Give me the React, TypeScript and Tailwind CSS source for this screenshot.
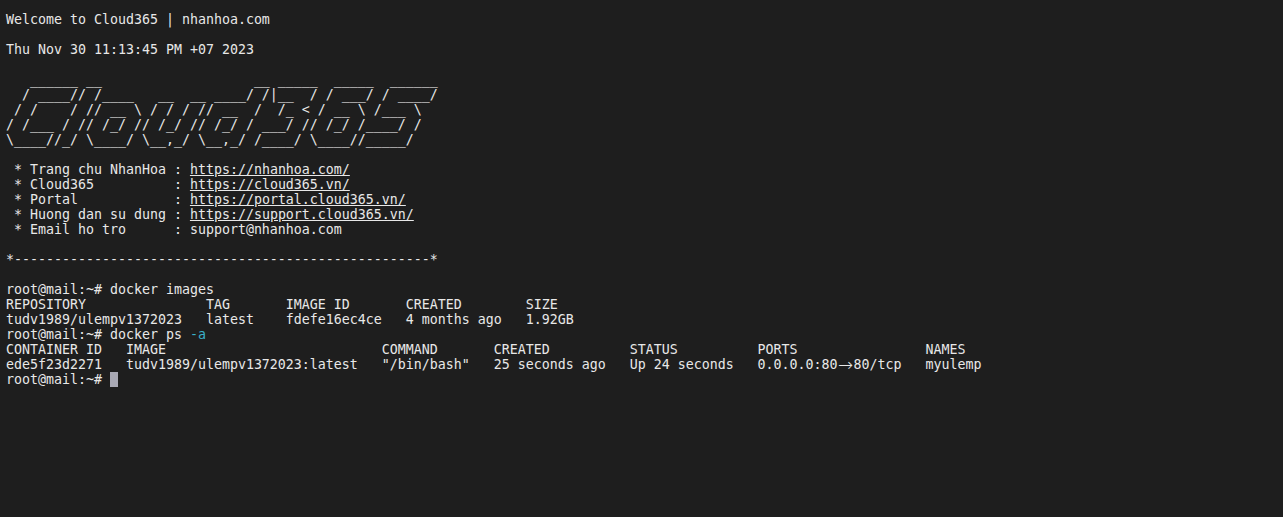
const asciiLines = [
  "   ______ __                   __ _____  _____  ______",
  "  / ____// /____   __  __ ____/ /|__  / / ___/ / ____/",
  " / /    / // __ \\ / / / // __  /  /_ < / __ \\ /___ \\",
  "/ /___ / // /_/ // /_/ // /_/ / ___/ // /_/ /____/ /",
  "\\____//_/ \\____/ \\__,_/ \\__,_/ /____/ \\____//_____/",
]

function Row({ children }: { children?: React.ReactNode }) {
  return <div className="h-[15px] whitespace-pre">{children}</div>
}

function Link({ children }: { children: string }) {
  return <span className="underline">{children}</span>
}

export default function App() {
  return (
    <div className="h-[517px] w-[1283px] overflow-hidden bg-[#1e1e1e]">
      <div className="pl-[6px] pt-3 font-['DejaVu_Sans_Mono',monospace] text-[13.29px] leading-[15px] text-[#e8e8e8]">
        <Row>Welcome to Cloud365 | nhanhoa.com</Row>
        <Row />
        <Row>Thu Nov 30 11:13:45 PM +07 2023</Row>
        <Row />
        {asciiLines.map((line) => (
          <Row key={line}>{line}</Row>
        ))}
        <Row />
        <Row> * Trang chu NhanHoa : <Link>https://nhanhoa.com/</Link></Row>
        <Row> * Cloud365          : <Link>https://cloud365.vn/</Link></Row>
        <Row> * Portal            : <Link>https://portal.cloud365.vn/</Link></Row>
        <Row> * Huong dan su dung : <Link>https://support.cloud365.vn/</Link></Row>
        <Row> * Email ho tro      : support@nhanhoa.com</Row>
        <Row />
        <Row>*----------------------------------------------------*</Row>
        <Row />
        <Row>root@mail:~# docker images</Row>
        <Row>REPOSITORY               TAG       IMAGE ID       CREATED        SIZE</Row>
        <Row>tudv1989/ulempv1372023   latest    fdefe16ec4ce   4 months ago   1.92GB</Row>
        <Row>root@mail:~# docker ps <span className="text-[#3ab0c8]">-a</span></Row>
        <Row>CONTAINER ID   IMAGE                           COMMAND       CREATED          STATUS          PORTS                NAMES</Row>
        <Row>
          ede5f23d2271   tudv1989/ulempv1372023:latest   "/bin/bash"   25 seconds ago   Up 24 seconds   0.0.0.0:80
          <span className="inline-block w-4 text-center align-top font-['DejaVu_Sans',sans-serif] text-[18px] font-light">→</span>
          80/tcp   myulemp
        </Row>
        <Row>root@mail:~# <span className="inline-block h-[15px] w-2 bg-[#a9a9b4] align-top" /></Row>
      </div>
    </div>
  )
}
